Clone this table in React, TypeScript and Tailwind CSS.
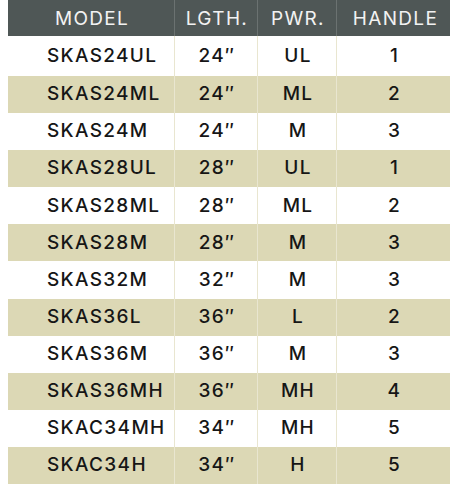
const rows = [
  {model: 'SKAS24UL', length: '24″', power: 'UL', handle: '1'},
  {model: 'SKAS24ML', length: '24″', power: 'ML', handle: '2'},
  {model: 'SKAS24M', length: '24″', power: 'M', handle: '3'},
  {model: 'SKAS28UL', length: '28″', power: 'UL', handle: '1'},
  {model: 'SKAS28ML', length: '28″', power: 'ML', handle: '2'},
  {model: 'SKAS28M', length: '28″', power: 'M', handle: '3'},
  {model: 'SKAS32M', length: '32″', power: 'M', handle: '3'},
  {model: 'SKAS36L', length: '36″', power: 'L', handle: '2'},
  {model: 'SKAS36M', length: '36″', power: 'M', handle: '3'},
  {model: 'SKAS36MH', length: '36″', power: 'MH', handle: '4'},
  {model: 'SKAC34MH', length: '34″', power: 'MH', handle: '5'},
  {model: 'SKAC34H', length: '34″', power: 'H', handle: '5'},
];

export default function App() {
  return (
    <div className="w-[450px] h-[495px] bg-white pl-2" style={{fontFamily: 'Inter, "Liberation Sans", sans-serif'}}>
      {/* header */}
      <div className="flex h-9 bg-[#4f5756] text-[#f2f2f2] text-[19px] tracking-[0.07em]">
        <div className="w-[167px] flex items-center justify-center pt-[3px] pl-[2px] border-r border-[#6b7271]">MODEL</div>
        <div className="w-[83px] flex items-center justify-center pt-[3px] pl-[2px] border-r border-[#6b7271]">LGTH.</div>
        <div className="w-[79px] flex items-center justify-center pt-[3px] pl-[2px] border-r border-[#6b7271]">PWR.</div>
        <div className="flex-1 flex items-center justify-center pt-[3px] pl-[4px]">HANDLE</div>
      </div>

      {/* body */}
      {rows.map((r, i) => (
        <div
          key={r.model}
          className={`flex text-[19px] font-medium tracking-[0.07em] text-[#161616] ${i === 0 ? 'h-10' : 'h-[37.1px]'} ${i % 2 === 1 ? 'bg-[#dcd8b5]' : 'bg-white'}`}
        >
          <div className="w-[167px] flex items-center pl-[39px] border-r border-[#e9e6d0]">{r.model}</div>
          <div className="w-[83px] flex items-center justify-center pl-[2px] border-r border-[#e9e6d0]">{r.length}</div>
          <div className="w-[79px] flex items-center justify-center pl-[2px] border-r border-[#e9e6d0]">{r.power}</div>
          <div className="flex-1 flex items-center justify-center pl-[2px]">{r.handle}</div>
        </div>
      ))}
    </div>
  );
}
